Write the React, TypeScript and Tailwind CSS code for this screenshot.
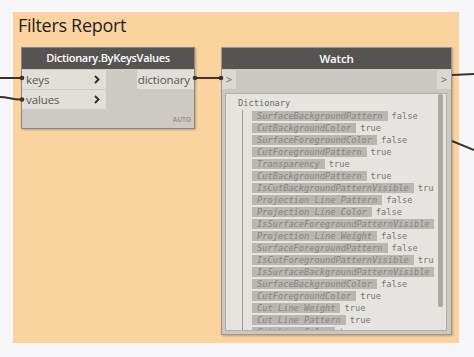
import React from "react";

const rows: [string, string][] = [
  ["SurfaceBackgroundPattern", "false"],
  ["CutBackgroundColor", "true"],
  ["SurfaceForegroundColor", "false"],
  ["CutForegroundPattern", "true"],
  ["Transparency", "true"],
  ["CutBackgroundPattern", "true"],
  ["IsCutBackgroundPatternVisible", "true"],
  ["Projection Line Pattern", "false"],
  ["Projection Line Color", "false"],
  ["IsSurfaceForegroundPatternVisible", "false"],
  ["Projection Line Weight", "false"],
  ["SurfaceForegroundPattern", "false"],
  ["IsCutForegroundPatternVisible", "true"],
  ["IsSurfaceBackgroundPatternVisible", "false"],
  ["SurfaceBackgroundColor", "false"],
  ["CutForegroundColor", "true"],
  ["Cut Line Weight", "true"],
  ["Cut Line Pattern", "true"],
  ["Cut Line Color", "true"],
];

const sans = { fontFamily: '"Open Sans", "Noto Sans", sans-serif' };
const mono = { fontFamily: '"DejaVu Sans Mono", "Liberation Mono", monospace' };

function Chevron() {
  return (
    <svg width="6" height="9" viewBox="0 0 6 9" className="shrink-0">
      <path d="M1 1 L4.5 4.5 L1 8" fill="none" stroke="#2f2f2f" strokeWidth="1.9" />
    </svg>
  );
}

function InPort({ label }: { label: string }) {
  return (
    <div className="flex h-[19px] w-[84px] items-center justify-between bg-[#e2dfdb] pl-[4px] pr-[6px] text-[11.5px] tracking-[-0.1px] text-[#555]" style={sans}>
      <span className="leading-none">{label}</span>
      <Chevron />
    </div>
  );
}

export default function App() {
  return (
    <div className="relative h-[357px] w-[474px] overflow-hidden bg-[#f7f7f9]">
      {/* group */}
      <div className="absolute left-[13px] top-[12px] h-[331px] w-[446px] bg-[#fbd39f]">
        <div className="pl-[5px] pt-[1px] text-[18px] leading-[24px] tracking-[-0.3px] text-[#1e1e1e]" style={sans}>
          Filters Report
        </div>
      </div>

      {/* Dictionary.ByKeysValues node */}
      <div className="absolute left-[21px] top-[47px] flex h-[82px] w-[174px] flex-col border border-[#8a8682] bg-[#cdc9c4] shadow-[1px_1px_2px_rgba(0,0,0,0.25)]">
        <div className="flex h-[21px] items-center justify-center bg-[#555453] text-[11px] font-semibold tracking-[-0.3px] text-white" style={sans}>
          Dictionary.ByKeysValues
        </div>
        <div className="flex flex-1 justify-between pt-[1px]">
          <div className="flex flex-col gap-[1px]">
            <InPort label="keys" />
            <InPort label="values" />
          </div>
          <div className="flex flex-col items-end justify-between">
            <div className="flex h-[19px] w-[57px] items-center justify-end bg-[#e2dfdb] pr-[4px] text-[11.5px] tracking-[-0.1px] text-[#555]" style={sans}>
              <span className="leading-none">dictionary</span>
            </div>
            <div className="pb-[5px] pr-[3px] text-[6.5px] font-bold leading-none text-[#9b958f]" style={sans}>
              AUTO
            </div>
          </div>
        </div>
      </div>

      {/* Watch node */}
      <div className="absolute left-[221px] top-[47px] flex h-[288px] w-[231px] flex-col border border-[#9a9692] bg-[#cbc7c2] shadow-[1px_1px_2px_rgba(0,0,0,0.25)]">
        <div className="flex h-[21px] items-center justify-center bg-[#555453] text-[11.5px] font-semibold tracking-[-0.2px] text-white" style={sans}>
          Watch
        </div>
        <div className="flex h-[20px] items-center justify-between pt-[1px]">
          <div className="flex h-[19px] w-[14px] items-center justify-center bg-[#dcd9d5] text-[10px] text-[#7a7a7a]" style={mono}>&gt;</div>
          <div className="flex h-[19px] w-[14px] items-center justify-center bg-[#dcd9d5] text-[10px] text-[#7a7a7a]" style={mono}>&gt;</div>
        </div>
        <div className="mb-[3px] ml-[3px] mr-[4px] mt-[4px] flex flex-1 overflow-hidden border border-[#b3afab] bg-[#e6e4e1]">
          <div className="flex-1 overflow-hidden pl-[12px] pt-[3px] text-[8.7px] leading-[12px]" style={mono}>
            <div className="text-[#6a6a6a]">Dictionary</div>
            <div className="ml-[4px] mt-[1px] border-l border-[#9c9a97] pl-[9px]">
              {rows.map(([k, v]) => (
                <div key={k} className="flex h-[12px] items-center whitespace-pre">
                  <span className="flex h-[10px] shrink-0 items-center bg-[#bab7b3] px-[5px] italic text-[#868686]">{k}</span>
                  <span className="ml-[4px] shrink-0 text-[#767676]">{v}</span>
                </div>
              ))}
            </div>
          </div>
          <div className="flex w-[12px] justify-center">
            <div className="h-[213px] w-[5px] rounded-[2px] bg-[#aba7a3]" />
          </div>
        </div>
      </div>

      {/* wires */}
      <svg className="pointer-events-none absolute left-0 top-0" width="474" height="357">
        <g stroke="#37342f" strokeWidth="2" fill="none">
          <path d="M0 78 L21 78" />
          <path d="M0 97 C8 97 12 99.5 21 99.5" />
          <path d="M195 78 L221 78" />
          <path d="M452 75 L474 74" />
          <path d="M452 141 L474 150" />
        </g>
        <g fill="#37342f">
          <circle cx="22" cy="78" r="2.3" />
          <circle cx="22" cy="99.5" r="2.3" />
          <circle cx="195" cy="78" r="2.3" />
          <circle cx="221" cy="78" r="2.3" />
        </g>
      </svg>
    </div>
  );
}
